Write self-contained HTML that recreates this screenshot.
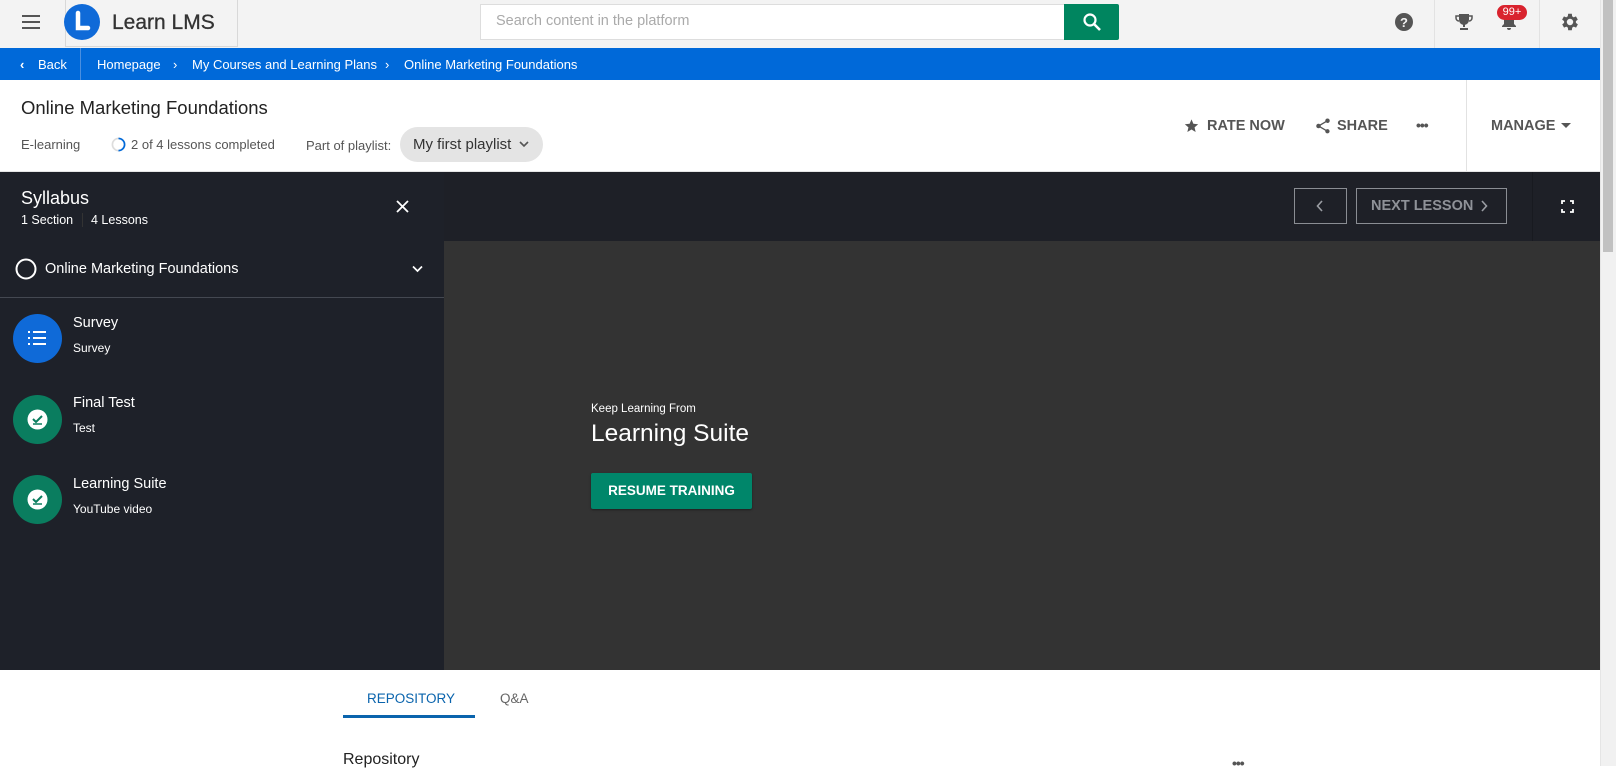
<!DOCTYPE html>
<html><head><meta charset="utf-8"><style>
*{box-sizing:border-box;margin:0;padding:0}
body{width:1616px;height:766px;overflow:hidden;background:#fff;font-family:"Liberation Sans",sans-serif;position:relative;color:#333}
.a{position:absolute}
.t{position:absolute;white-space:nowrap;line-height:1}
</style></head><body>
<!-- top bar -->
<div class="a" style="left:0;top:0;width:1600px;height:48px;background:#f3f3f3"></div>
<svg class="a" style="left:21px;top:13px" width="20" height="18" viewBox="0 0 20 18"><path d="M1 3h18M1 9h18M1 15h18" stroke="#555" stroke-width="2"/></svg>
<div class="a" style="left:65px;top:0;width:173px;height:47px;border:1px solid #d8d8d8;border-top:none;background:#f3f3f3"></div>
<svg class="a" style="left:64px;top:4px" width="36" height="36" viewBox="0 0 36 36"><circle cx="18" cy="18" r="18" fill="#0f6ad8"/><path d="M14 9v15h10" stroke="#fff" stroke-width="4.5" fill="none" stroke-linecap="round"/></svg>
<div class="t" style="left:112px;top:12px;font-size:21px;color:#333;-webkit-text-stroke:0.3px #333">Learn LMS</div>
<div class="a" style="left:480px;top:4px;width:585px;height:36px;background:#fff;border:1px solid #ddd"></div>
<div class="t" style="left:496px;top:14px;font-size:14.5px;color:#aaa">Search content in the platform</div>
<div class="a" style="left:1064px;top:4px;width:55px;height:36px;background:#00855f;border-radius:0 2px 2px 0"></div>
<svg class="a" style="left:1082px;top:12px" width="20" height="20" viewBox="0 0 20 20"><circle cx="8" cy="8" r="5.5" stroke="#fff" stroke-width="2.2" fill="none"/><path d="M12 12l6 6" stroke="#fff" stroke-width="2.6"/></svg>
<svg class="a" style="left:1395px;top:13px" width="18" height="18" viewBox="0 0 18 18"><circle cx="9" cy="9" r="9" fill="#555"/><text x="9" y="14" font-size="13" font-weight="bold" fill="#f3f3f3" text-anchor="middle" font-family="Liberation Sans">?</text></svg>
<div class="a" style="left:1434px;top:0;width:1px;height:48px;background:#e2e2e2"></div>
<svg class="a" style="left:1455px;top:13px" width="18" height="18" viewBox="0 0 18 18"><path d="M4 1h10v6a5 5 0 0 1-10 0z" fill="#555"/><path d="M4 3H1v2a3 3 0 0 0 3 3M14 3h3v2a3 3 0 0 1-3 3" stroke="#555" stroke-width="1.5" fill="none"/><path d="M8 11h2v3H8z M5 15h8v2H5z" fill="#555"/></svg>
<svg class="a" style="left:1500px;top:13px" width="18" height="18" viewBox="0 0 18 18"><path d="M9 1a5 5 0 0 0-5 5v5l-2 2v1h14v-1l-2-2V6a5 5 0 0 0-5-5zM7 15h4a2 2 0 0 1-4 0z" fill="#555"/></svg>
<div class="a" style="left:1497px;top:5px;width:30px;height:15px;border-radius:8px;background:#d9232e;color:#fff;font-size:11px;text-align:center;line-height:15px">99+</div>
<div class="a" style="left:1539px;top:0;width:1px;height:48px;background:#e2e2e2"></div>
<svg class="a" style="left:1559px;top:11px" width="22" height="22" viewBox="0 0 24 24"><path fill="#555" d="M19.4 13a7.5 7.5 0 0 0 0-2l2.1-1.6-2-3.5-2.5 1a7.3 7.3 0 0 0-1.7-1L15 3h-4l-.4 2.9a7.3 7.3 0 0 0-1.7 1l-2.5-1-2 3.5L6.6 11a7.5 7.5 0 0 0 0 2l-2.1 1.6 2 3.5 2.5-1a7.3 7.3 0 0 0 1.7 1L11 21h4l.4-2.9a7.3 7.3 0 0 0 1.7-1l2.5 1 2-3.5zM13 15.5a3.5 3.5 0 1 1 0-7 3.5 3.5 0 0 1 0 7z" transform="translate(-1 0)"/></svg>
<!-- scrollbar -->
<div class="a" style="left:1600px;top:0;width:16px;height:766px;background:#f1f1f1;border-left:1px solid #e5e5e5"></div>
<div class="a" style="left:1603px;top:0;width:10px;height:252px;background:#c1c1c1"></div>
<!-- breadcrumb -->
<div class="a" style="left:0;top:48px;width:1600px;height:32px;background:#0069d9"></div>
<div class="a" style="left:80px;top:48px;width:1px;height:32px;background:#4a8fe0"></div>
<div style="position:absolute;top:58px;left:0;font-size:13px;color:#fff;line-height:1;white-space:nowrap">
<span class="t" style="left:20px;font-weight:bold">‹</span><span class="t" style="left:38px">Back</span>
<span class="t" style="left:97px">Homepage</span><span class="t" style="left:173px">›</span>
<span class="t" style="left:192px">My Courses and Learning Plans</span><span class="t" style="left:385px">›</span>
<span class="t" style="left:404px">Online Marketing Foundations</span></div>
<!-- header -->
<div class="t" style="left:21px;top:99px;font-size:18.5px;color:#222">Online Marketing Foundations</div>
<div class="t" style="left:21px;top:138px;font-size:13px;color:#555">E-learning</div>
<svg class="a" style="left:111px;top:137px" width="15" height="15" viewBox="0 0 16 16"><circle cx="8" cy="8" r="6.5" stroke="#ddd" stroke-width="1.8" fill="none"/><path d="M8 1.5a6.5 6.5 0 0 1 0 13" stroke="#0069d9" stroke-width="1.8" fill="none"/></svg>
<div class="t" style="left:131px;top:138px;font-size:13px;color:#555">2 of 4 lessons completed</div>
<div class="t" style="left:306px;top:139px;font-size:13px;color:#555">Part of playlist:</div>
<div class="a" style="left:400px;top:127px;width:143px;height:35px;border-radius:18px;background:#e4e4e4"></div>
<div class="t" style="left:413px;top:137px;font-size:15px;color:#333">My first playlist</div>
<svg class="a" style="left:519px;top:140px" width="10" height="8" viewBox="0 0 10 8"><path d="M1 2l4 4 4-4" stroke="#555" stroke-width="1.6" fill="none"/></svg>
<svg class="a" style="left:1183px;top:118px" width="17" height="16" viewBox="0 0 24 24"><path fill="#555" d="M12 17.3l6.2 3.7-1.6-7 5.4-4.7-7.2-.6L12 2 9.2 8.7 2 9.3l5.4 4.7-1.6 7z"/></svg>
<div class="t" style="left:1207px;top:119px;font-size:14.5px;font-weight:bold;color:#555">RATE NOW</div>
<svg class="a" style="left:1314px;top:117px" width="18" height="18" viewBox="0 0 24 24"><path fill="#555" d="M18 16.1c-.8 0-1.5.3-2 .8l-7.1-4.2c.1-.2.1-.5.1-.7s0-.5-.1-.7L16 7.2c.5.5 1.2.8 2 .8 1.7 0 3-1.3 3-3s-1.3-3-3-3-3 1.3-3 3c0 .2 0 .5.1.7L8 9.8C7.5 9.3 6.8 9 6 9c-1.7 0-3 1.3-3 3s1.3 3 3 3c.8 0 1.5-.3 2-.8l7.1 4.2c-.1.2-.1.4-.1.6 0 1.6 1.3 2.9 2.9 2.9s2.9-1.3 2.9-2.9-1.3-2.9-2.8-2.9z"/></svg>
<div class="t" style="left:1337px;top:119px;font-size:14.5px;font-weight:bold;color:#555">SHARE</div>
<div class="t" style="left:1416px;top:118px;font-size:14px;font-weight:bold;color:#555;letter-spacing:-1px">•••</div>
<div class="a" style="left:1466px;top:80px;width:1px;height:92px;background:#e2e2e2"></div>
<div class="t" style="left:1491px;top:119px;font-size:14.5px;font-weight:bold;color:#555">MANAGE</div>
<svg class="a" style="left:1561px;top:123px" width="10" height="6" viewBox="0 0 10 6"><path d="M0 0h10L5 5z" fill="#555"/></svg>
<div class="a" style="left:0;top:171px;width:1600px;height:1px;background:#e5e5e5"></div>
<!-- dark area -->
<div class="a" style="left:0;top:172px;width:444px;height:498px;background:#1e2129"></div>
<div class="a" style="left:444px;top:172px;width:1156px;height:69px;background:#1e2027"></div>
<div class="a" style="left:444px;top:241px;width:1156px;height:429px;background:#333"></div>
<div class="t" style="left:21px;top:189px;font-size:18px;color:#fff">Syllabus</div>
<div class="t" style="left:21px;top:214px;font-size:12.5px;color:#fff">1 Section</div>
<div class="a" style="left:82px;top:213px;width:1px;height:14px;background:#333"></div>
<div class="t" style="left:91px;top:214px;font-size:12.5px;color:#fff">4 Lessons</div>
<svg class="a" style="left:396px;top:200px" width="13" height="13" viewBox="0 0 13 13"><path d="M1 1l11 11M12 1L1 12" stroke="#fff" stroke-width="1.8"/></svg>
<svg class="a" style="left:15px;top:258px" width="22" height="22" viewBox="0 0 22 22"><circle cx="11" cy="11" r="9.5" stroke="#fff" stroke-width="2" fill="none"/></svg>
<div class="t" style="left:45px;top:262px;font-size:14.5px;color:#fff">Online Marketing Foundations</div>
<svg class="a" style="left:412px;top:265px" width="11" height="8" viewBox="0 0 11 8"><path d="M1 1.5l4.5 4.5 4.5-4.5" stroke="#fff" stroke-width="1.7" fill="none"/></svg>
<div class="a" style="left:0;top:297px;width:444px;height:1px;background:#444851"></div>

<div class="a" style="left:13px;top:314px;width:49px;height:49px;border-radius:50%;background:#0f6ad8"></div>
<svg class="a" style="left:27px;top:329px" width="20" height="18" viewBox="0 0 20 18"><path d="M6 3h13M6 9h13M6 15h13" stroke="#fff" stroke-width="2"/><path d="M1 3h2M1 9h2M1 15h2" stroke="#fff" stroke-width="2"/></svg>
<div class="t" style="left:73px;top:316px;font-size:14.5px;color:#fff">Survey</div>
<div class="t" style="left:73px;top:342px;font-size:12px;color:#fff">Survey</div>

<div class="a" style="left:13px;top:395px;width:49px;height:49px;border-radius:50%;background:#0a7d5f"></div>
<svg class="a" style="left:26px;top:408px" width="23" height="23" viewBox="0 0 23 23"><circle cx="11.5" cy="11.5" r="10" fill="#fff"/><path d="M7 11l3 3 6-6" stroke="#0a7d5f" stroke-width="2" fill="none"/><path d="M7 16h9" stroke="#0a7d5f" stroke-width="1.5"/></svg>
<div class="t" style="left:73px;top:396px;font-size:14.5px;color:#fff">Final Test</div>
<div class="t" style="left:73px;top:422px;font-size:12px;color:#fff">Test</div>

<div class="a" style="left:13px;top:475px;width:49px;height:49px;border-radius:50%;background:#0a7d5f"></div>
<svg class="a" style="left:26px;top:488px" width="23" height="23" viewBox="0 0 23 23"><circle cx="11.5" cy="11.5" r="10" fill="#fff"/><path d="M7 11l3 3 6-6" stroke="#0a7d5f" stroke-width="2" fill="none"/><path d="M7 16h9" stroke="#0a7d5f" stroke-width="1.5"/></svg>
<div class="t" style="left:73px;top:477px;font-size:14.5px;color:#fff">Learning Suite</div>
<div class="t" style="left:73px;top:503px;font-size:12px;color:#fff">YouTube video</div>

<div class="a" style="left:1294px;top:188px;width:53px;height:36px;border:1px solid #8a8d93"></div>
<svg class="a" style="left:1316px;top:200px" width="8" height="12" viewBox="0 0 8 12"><path d="M6 1L1.5 6 6 11" stroke="#9a9da3" stroke-width="1.6" fill="none"/></svg>
<div class="a" style="left:1356px;top:188px;width:151px;height:36px;border:1px solid #8a8d93"></div>
<div class="t" style="left:1371px;top:199px;font-size:14.5px;font-weight:bold;color:#8f9298">NEXT LESSON</div>
<svg class="a" style="left:1480px;top:200px" width="8" height="12" viewBox="0 0 8 12"><path d="M2 1l4.5 5L2 11" stroke="#9a9da3" stroke-width="1.6" fill="none"/></svg>
<div class="a" style="left:1532px;top:172px;width:1px;height:69px;background:#181a20"></div>
<svg class="a" style="left:1561px;top:200px" width="13" height="13" viewBox="0 0 13 13"><path d="M1 4V1h3M9 1h3v3M12 9v3H9M4 12H1V9" stroke="#fff" stroke-width="1.8" fill="none"/></svg>

<div class="t" style="left:591px;top:404px;font-size:11.5px;color:#fff">Keep Learning From</div>
<div class="t" style="left:591px;top:422px;font-size:24.5px;color:#fff">Learning Suite</div>
<div class="a" style="left:591px;top:473px;width:161px;height:36px;background:#00866a;border-radius:2px;box-shadow:0 1px 2px rgba(0,0,0,.4)"></div>
<div class="t" style="left:591px;top:484px;width:161px;text-align:center;font-size:13.5px;font-weight:bold;color:#fff">RESUME TRAINING</div>

<!-- tabs -->
<div class="t" style="left:367px;top:692px;font-size:13.5px;color:#0a64ad">REPOSITORY</div>
<div class="t" style="left:500px;top:692px;font-size:13.5px;color:#666">Q&amp;A</div>
<div class="a" style="left:343px;top:715px;width:132px;height:3px;background:#0a64ad"></div>
<div class="t" style="left:343px;top:752px;font-size:16px;color:#222">Repository</div>
<div class="t" style="left:1232px;top:756px;font-size:14px;font-weight:bold;color:#555;letter-spacing:-1px">•••</div>
</body></html>
